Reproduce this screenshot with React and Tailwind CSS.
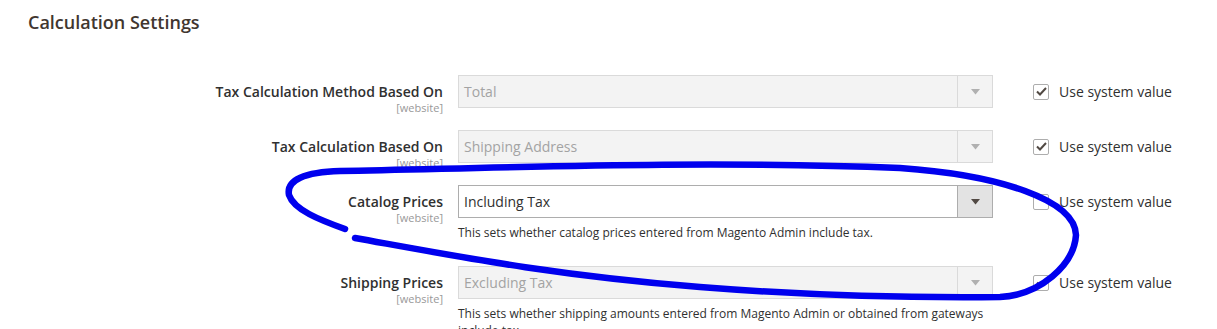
import React from "react";

const rows = [
  { label: "Tax Calculation Method Based On", value: "Total", disabled: true, checked: true },
  { label: "Tax Calculation Based On", value: "Shipping Address", disabled: true, checked: true },
  {
    label: "Catalog Prices",
    value: "Including Tax",
    disabled: false,
    checked: false,
    note: "This sets whether catalog prices entered from Magento Admin include tax.",
  },
  {
    label: "Shipping Prices",
    value: "Excluding Tax",
    disabled: true,
    checked: true,
    note: "This sets whether shipping amounts entered from Magento Admin or obtained from gateways include tax.",
  },
];

/* ================= SELECT ================= */
function FakeSelect({ value, disabled }) {
  return (
    <div
      className={`flex h-[33px] w-[535px] border ${
        disabled ? "border-[#dadada] bg-[#f3f3f3]" : "border-[#adadad] bg-white"
      }`}
    >
      <div
        className={`flex-1 flex items-center pl-[5px] text-[14px] ${
          disabled ? "text-[#a3a3a3]" : "text-[#303030]"
        }`}
      >
        {value}
      </div>
      <div
        className={`w-[35px] flex items-center justify-center border-l ${
          disabled ? "border-[#dadada] bg-[#f3f3f3]" : "border-[#adadad] bg-[#e3e3e3]"
        }`}
      >
        <svg width="9" height="6" viewBox="0 0 9 6">
          <path d="M0 0 H9 L4.5 5.5 Z" fill={disabled ? "#b0b0b0" : "#514943"} />
        </svg>
      </div>
    </div>
  );
}

/* ================= CHECKBOX ================= */
function SystemValue({ checked }) {
  return (
    <div className="flex items-center h-[33px] gap-[10px]">
      <div className="w-[16px] h-[16px] border border-[#adadad] rounded-[2px] bg-white flex items-center justify-center">
        {checked && (
          <svg width="11" height="9" viewBox="0 0 11 9">
            <path d="M1 4.5 L4 7.5 L10 1" stroke="#514943" strokeWidth="2" fill="none" />
          </svg>
        )}
      </div>
      <span className="text-[14px] text-[#303030]">Use system value</span>
    </div>
  );
}

/* ================= ROW ================= */
function SettingRow({ row }) {
  return (
    <div className="flex">
      <div className="w-[415px] text-right pt-[7px]">
        <div className="text-[14px] leading-[20px] font-semibold text-[#303030]">{row.label}</div>
        <div className="text-[11px] leading-[12px] text-[#999]">[website]</div>
      </div>
      <div className="ml-[15px] w-[535px]">
        <FakeSelect value={row.value} disabled={row.disabled} />
        {row.note && (
          <p className="mt-[6px] text-[12px] leading-[17px] text-[#303030]">{row.note}</p>
        )}
      </div>
      <div className="ml-[40px]">
        <SystemValue checked={row.checked} />
      </div>
    </div>
  );
}

/* ================= MAIN ================= */
export default function App() {
  return (
    <div
      className="relative w-[1217px] h-[329px] overflow-hidden bg-white"
      style={{ fontFamily: "'Open Sans', 'Noto Sans', sans-serif" }}
    >
      <div className="px-[28px] pt-[10px]">
        <h2 className="text-[18px] leading-[24px] font-semibold text-[#41362f]">Calculation Settings</h2>

        <div className="mt-[41px] flex flex-col">
          <div className="mb-[16px]"><SettingRow row={rows[0]} /></div>
          <div className="mb-[16px]"><SettingRow row={rows[1]} /></div>
          <div className="mb-[25px]"><SettingRow row={rows[2]} /></div>
          <div><SettingRow row={rows[3]} /></div>
        </div>
      </div>

      {/* hand drawn marker loop */}
      <svg className="absolute inset-0 pointer-events-none" width="1217" height="329" viewBox="0 0 1217 329">
        <path
          d="M345 229 C320 220 294 210 289 195 C286 180 305 172 340 171 C500 168 700 160 900 168 C1000 175 1075 200 1076 235 C1074 265 1040 295 1000 297 C900 298 800 295 700 287 C550 275 450 255 355 238"
          stroke="#0000ee"
          strokeWidth="6.5"
          strokeLinecap="round"
          fill="none"
        />
      </svg>
    </div>
  );
}
